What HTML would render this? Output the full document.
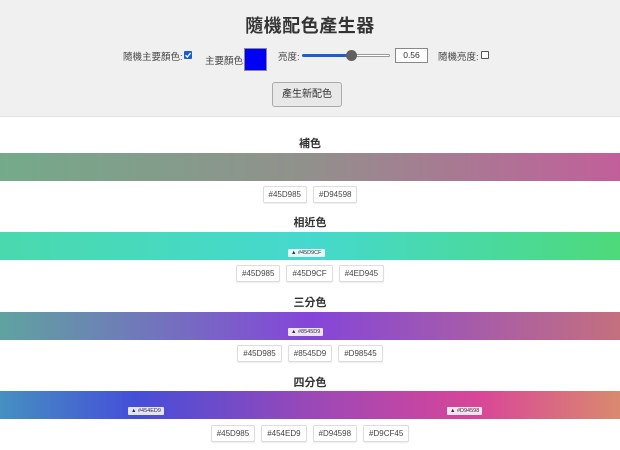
<!DOCTYPE html>
<html><head><meta charset="utf-8"><style>
*{box-sizing:border-box;margin:0;padding:0}
body{width:620px;height:450px;overflow:hidden;background:#fff;font-family:"Liberation Sans","Noto Sans CJK TC",sans-serif;color:#333;position:relative}
.hdr{position:absolute;left:0;top:0;width:620px;height:117px;background:#f0f0f0;border-bottom:1px solid #e4e4e4}
.abs{position:absolute}
h1{position:absolute;left:0;width:620px;top:12px;text-align:center;font-size:18px;font-weight:bold;color:#333;letter-spacing:0.5px}
.lbl{font-size:9.5px;color:#444;position:absolute}
.cb{position:absolute;width:8px;height:8px;border:1px solid #555;border-radius:1px;background:#fff}
.btn{position:absolute;left:272px;top:82px;width:70px;height:25px;border:1px solid #aaa;border-radius:3px;background:#e8e8e8;font-size:10px;text-align:center;line-height:23px}
.t{position:absolute;left:0;width:620px;text-align:center;font-size:11px;font-weight:bold;color:#333}
.bar{position:absolute;left:0;width:620px;height:28px}
.chips{position:absolute;left:0;width:620px;text-align:center;font-size:0}
.chip{display:inline-block;font-size:8px;color:#444;border:1px solid #ddd;border-radius:2px;padding:3px 5px;margin:0 3px;background:#fff;box-shadow:0 1px 1px rgba(0,0,0,.08)}
.mk{position:absolute;background:rgba(255,255,255,.85);font-size:5.5px;color:#333;height:8px;line-height:8px;padding:0 3px;border-radius:1px}
</style></head><body>
<div class="hdr">
<h1>隨機配色產生器</h1>
<div class="lbl" style="left:123px;top:49px">隨機主要顏色:</div>
<div class="cb" style="left:184px;top:51px;background:#1a5fd0;border-color:#1a5fd0"><svg width="8" height="8" style="position:absolute;left:-1px;top:-1px"><path d="M1.5 4.2L3.3 6 6.6 2" stroke="#fff" stroke-width="1.3" fill="none"/></svg></div>
<div class="lbl" style="left:205px;top:53px">主要顏色:</div>
<div class="abs" style="left:244px;top:48px;width:23px;height:23px;background:#0000f5;border:1px solid #888"></div>
<div class="lbl" style="left:278px;top:49px">亮度:</div>
<div class="abs" style="left:302px;top:54px;width:50px;height:3px;background:#1a5fd0;border-radius:2px"></div>
<div class="abs" style="left:352px;top:54px;width:38px;height:3px;background:#fff;border:1px solid #999;border-radius:2px"></div>
<div class="abs" style="left:346px;top:50px;width:11px;height:11px;background:#606060;border-radius:50%"></div>
<div class="abs" style="left:395px;top:48px;width:33px;height:15px;background:#fff;border:1px solid #888;font-size:8.5px;text-align:center;line-height:13px">0.56</div>
<div class="lbl" style="left:438px;top:49px">隨機亮度:</div>
<div class="cb" style="left:481px;top:51px"></div>
<div class="btn">產生新配色</div>
</div>

<div class="t" style="top:135px">補色</div>
<div class="bar" style="top:153px;background:linear-gradient(90deg,#74aa8a,#92908c 50%,#c25f9a)"></div>
<div class="chips" style="top:186px"><span class="chip">#45D985</span><span class="chip">#D94598</span></div>

<div class="t" style="top:214px">相近色</div>
<div class="bar" style="top:232px;background:linear-gradient(90deg,#4ad9ad,#45d9cf 50%,#4ed97a)"></div>
<div class="mk" style="left:288px;top:249px">▲ #45D9CF</div>
<div class="chips" style="top:265px"><span class="chip">#45D985</span><span class="chip">#45D9CF</span><span class="chip">#4ED945</span></div>

<div class="t" style="top:294px">三分色</div>
<div class="bar" style="top:312px;background:linear-gradient(90deg,#5fa3a0,#8545d9 50%,#c4707e)"></div>
<div class="mk" style="left:288px;top:328px">▲ #8545D9</div>
<div class="chips" style="top:345px"><span class="chip">#45D985</span><span class="chip">#8545D9</span><span class="chip">#D98545</span></div>

<div class="t" style="top:374px">四分色</div>
<div class="bar" style="top:391px;background:linear-gradient(90deg,#4590c0,#454ed9 22%,#9a48b8 50%,#d94598 77%,#d98a6e)"></div>
<div class="mk" style="left:128px;top:407px">▲ #454ED9</div>
<div class="mk" style="left:447px;top:407px">▲ #D94598</div>
<div class="chips" style="top:425px"><span class="chip">#45D985</span><span class="chip">#454ED9</span><span class="chip">#D94598</span><span class="chip">#D9CF45</span></div>
</body></html>
